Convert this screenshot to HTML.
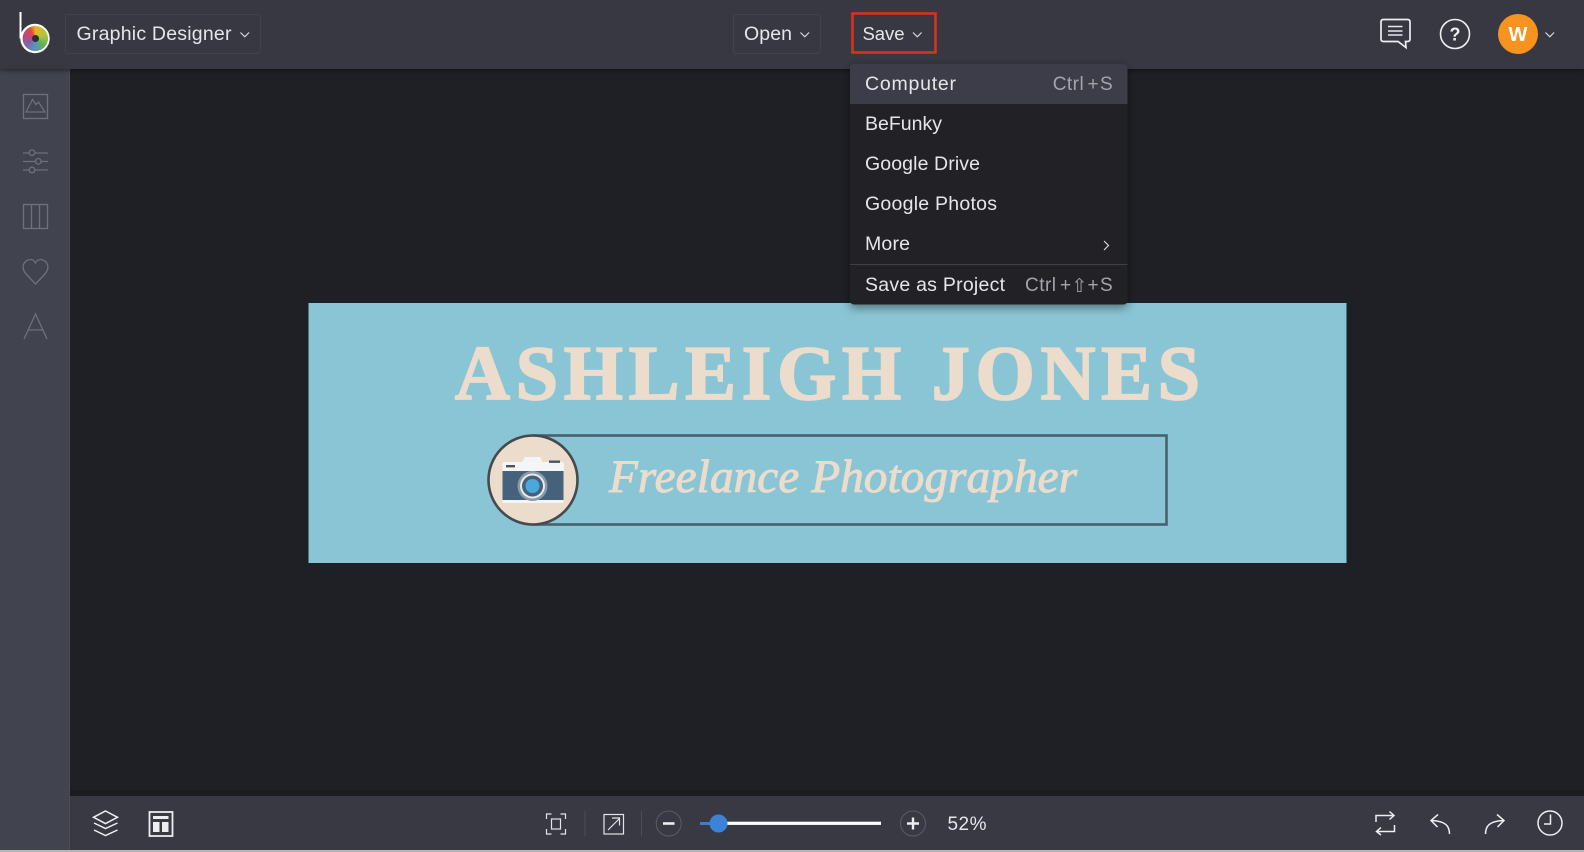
<!DOCTYPE html>
<html lang="en"><head><meta charset="utf-8"><title>Graphic Designer</title>
<style>
html,body{margin:0;padding:0;width:1584px;height:852px;overflow:hidden;background:#1f2025}
svg{display:block;position:absolute;left:0;top:0}
text{font-family:"Liberation Sans","DejaVu Sans",sans-serif}
.t{font-size:19.5px;fill:#e6e6ea}
.k{font-size:19px;fill:#a3a4ab}
.ch{fill:none;stroke:#d8d8dd;stroke-width:1.2}
.s{fill:none;stroke:#6e707b;stroke-width:1.3}
.w{fill:none;stroke:#eeeef0;stroke-width:1.5}
#wheel{position:absolute;left:22.500px;top:26px;width:25px;height:25px;border-radius:50%;background:conic-gradient(#e8b32c 0deg,#a8c83a 70deg,#62b05a 130deg,#5a8fc8 190deg,#8a5ea8 240deg,#c8447a 290deg,#de4a38 330deg,#e8b32c 360deg)}
</style></head><body>
<svg width="1584" height="852" viewBox="0 0 1584 852" xmlns="http://www.w3.org/2000/svg">
<defs>
<filter id="sh" x="-10%" y="-10%" width="120%" height="125%"><feDropShadow dx="0" dy="3" stdDeviation="5" flood-color="#000" flood-opacity=".45"/></filter>
<filter id="sb" x="-5%" y="-20%" width="110%" height="160%"><feDropShadow dx="0" dy="1" stdDeviation="3" flood-color="#000" flood-opacity=".5"/></filter>
</defs>
<rect width="1584" height="852" fill="#1f2025"/>
<!-- sidebar -->
<rect x="0" y="69" width="70" height="783" fill="#41434f"/>
<rect x="69" y="69" width="1" height="783" fill="#494b57"/>
<!-- canvas -->
<rect x="308.5" y="303" width="1038" height="260" fill="#8ac5d5"/>
<g transform="translate(455 399) scale(1 1.02)"><text x="0" y="0" textLength="745" lengthAdjust="spacing" style="font-family:'Liberation Serif',serif;font-weight:700;font-size:76px;fill:#ecdccb;stroke:#ecdccb;stroke-width:1.8">ASHLEIGH JONES</text></g>
<rect x="533" y="435.5" width="633.5" height="89" fill="none" stroke="#47626f" stroke-width="2.6"/>
<text x="609" y="492" textLength="468" lengthAdjust="spacing" style="font-family:'Liberation Serif',serif;font-style:italic;font-size:47px;fill:#ecdccb;stroke:#ecdccb;stroke-width:1">Freelance Photographer</text>
<circle cx="533" cy="480" r="44.5" fill="#ecdccb" stroke="#454a4e" stroke-width="2.6"/>
<path d="M502.5 471v-7q0-2 2-2h18l2-5h16l2 5h19q2.500 0 2.500 2v7z" fill="#f3f5f8"/>
<rect x="502.5" y="471" width="61" height="29" fill="#45627a"/>
<rect x="502.5" y="500" width="61" height="3" fill="#f3f5f8"/>
<rect x="506" y="465" width="9" height="2.400" fill="#4a5560"/><rect x="549" y="460.500" width="11" height="2.400" fill="#4a5560"/>
<circle cx="532.5" cy="486" r="15" fill="#8b9aa8"/><circle cx="532.5" cy="486" r="12.5" fill="#e6ebef"/><circle cx="532.5" cy="486" r="10.5" fill="#45627a"/><circle cx="532.5" cy="486" r="7" fill="#4aa8dc"/>
<!-- sidebar icons -->
<g class="s">
<rect x="23.5" y="94.5" width="24" height="24"/><path d="M26 112l6.500-12.500 3.500 5 2.500-2.500 6.500 10z"/>
<path d="M23 153h6M35 153h13M23 161.500h12.500M41 161.500h7M23 170h6M35 170h13"/>
<circle cx="32" cy="152.700" r="2.800"/><circle cx="38.300" cy="161.300" r="2.800"/><circle cx="32" cy="170" r="2.800"/>
<rect x="23.500" y="204.500" width="24" height="24"/><path d="M31.500 204.500v24M39.500 204.500v24"/>
<path d="M35.500 284l-9-9.500c-7-7.500-2-15 4-15 2.500 0 4 1.500 5 3.500 1-2 2.500-3.500 5-3.500 6 0 11 7.500 4 15z"/>
<path d="M24 339l11.500-25 11.500 25M28 330h15"/>
</g>
<!-- top bar -->
<rect x="0" y="0" width="1584" height="69" fill="#383943" filter="url(#sb)"/>
<path d="M20.500 12v26.500" stroke="#fff" stroke-width="2" fill="none"/>
<circle cx="35" cy="38.500" r="13.500" fill="none" stroke="#fff" stroke-width="2.400"/>
<rect x="65.500" y="14.500" width="195" height="39" rx="3" fill="none" stroke="#41424c"/>
<text class="t" x="76.500" y="40" textLength="155">Graphic Designer</text>
<path class="ch" d="M240.500 32.500l4.300 4.300 4.300-4.300"/>
<rect x="733.500" y="14.500" width="87" height="39" rx="3" fill="none" stroke="#41424c"/>
<text class="t" x="744" y="40" textLength="48">Open</text>
<path class="ch" d="M800.500 32.500l4.300 4.300 4.300-4.300"/>
<rect x="852.500" y="13.500" width="83" height="39" fill="none" stroke="#d7321c" stroke-width="2.600"/>
<text class="t" x="862.500" y="40" textLength="42" style="font-size:18.500px">Save</text>
<path class="ch" d="M913 32.500l4.300 4.300 4.300-4.300"/>
<!-- top right -->
<path d="M1381 22q0-2.500 2.500-2.500h24q2.500 0 2.500 2.500v17q0 2.500-2.500 2.500h-2l.5 6-8-6h-14.500q-2.500 0-2.500-2.500z" fill="none" stroke="#eeeef0" stroke-width="1.700"/>
<path d="M1388 26.500h14.500M1388 31h14.500M1388 35h14.500" stroke="#e6e6ea" stroke-width="1.600"/>
<circle cx="1455" cy="34" r="14.500" fill="none" stroke="#eeeef0" stroke-width="1.600"/>
<text x="1455" y="40.500" text-anchor="middle" style="font-size:18px;font-weight:700;fill:#eeeef0">?</text>
<circle cx="1518" cy="34" r="20" fill="#f7931e"/>
<text x="1518" y="41" text-anchor="middle" style="font-size:20px;font-weight:700;fill:#fff">W</text>
<path class="ch" d="M1545.500 32.500l4.300 4.300 4.300-4.300"/>
<!-- menu -->
<rect x="850" y="64" width="277.500" height="240.500" rx="4" fill="#212228" filter="url(#sh)"/>
<path d="M850 104V68q0-4 4-4h269.500q4 0 4 4v36z" fill="#3c3d48"/>
<rect x="850" y="264" width="277.500" height="1" fill="#3f4049"/>
<text class="t" x="865" y="90" textLength="91">Computer</text>
<text class="k" x="1052.700" y="90" textLength="31">Ctrl</text><text class="k" x="1087.500" y="90">+</text><text class="k" x="1100" y="90">S</text>
<text class="t" x="865" y="130" textLength="77">BeFunky</text>
<text class="t" x="865" y="170" textLength="115">Google Drive</text>
<text class="t" x="865" y="210" textLength="132">Google Photos</text>
<text class="t" x="865" y="250" textLength="45">More</text>
<path class="ch" d="M1104 241l4.500 4.500-4.500 4.500"/>
<text class="t" x="865" y="291" textLength="140">Save as Project</text>
<text class="k" x="1025" y="291" textLength="31">Ctrl</text><text class="k" x="1060" y="291">+</text><text class="k" x="1071.500" y="292" style="font-size:19px">⇧</text><text class="k" x="1087.500" y="291">+</text><text class="k" x="1100" y="291">S</text>
<!-- bottom bar -->
<rect x="70" y="796" width="1514" height="54" fill="#383943"/>
<rect x="0" y="850" width="1584" height="2" fill="#b5b5b8"/>
<rect x="70" y="790" width="1514" height="6" fill="#17181c" opacity=".5"/>
<!-- layers -->
<g class="w">
<path d="M105.500 811l12 6.300-12 6.300-12-6.300z"/><path d="M94 823l11.500 5.500 12-5.500M94 830l11.500 5.500 12-5.500"/>
<rect x="149.500" y="812" width="23" height="24" stroke-width="1.800"/>
</g>
<path d="M153 816h15.500v3H153zM153 822h6.500v10H153zM162 822h6.500v10H162z" fill="#eeeef0"/>
<g fill="none" stroke="#e4e4e8" stroke-width="1.200">
<path d="M546.500 819v-5h5M560.500 814h5v5M565.500 829v5h-5M551.500 834h-5v-5"/>
<rect x="551.500" y="819" width="9" height="10"/>
<rect x="604" y="814.500" width="19.500" height="19.500"/><path d="M608 830l11.500-11.500M612 818h7.500v7.500"/>
</g>
<path d="M585 811v25M641.500 811v25" stroke="#4c4d58"/>
<circle cx="668.700" cy="823.500" r="12.500" fill="none" stroke="#5a5b66"/>
<path d="M663 823.500h11.500" stroke="#eeeef0" stroke-width="2.600"/>
<rect x="700" y="822" width="20" height="3" fill="#3b7ed2"/>
<rect x="718" y="821.700" width="163" height="3.200" fill="#fff"/>
<circle cx="718.500" cy="823.500" r="9" fill="#3b82d8"/>
<circle cx="913" cy="823.500" r="12.500" fill="none" stroke="#5a5b66"/>
<path d="M907 823.500h12M913 817.500v12" stroke="#eeeef0" stroke-width="2.400"/>
<text x="947.500" y="830" textLength="39" style="font-size:19px;fill:#e6e6ea">52%</text>
<g class="w">
<path d="M1376 822v-6.500h18M1389.500 811.500l4.500 4-4.500 4"/><path d="M1394.500 825v6.500h-18M1381 835l-4.500-3.500 4.500-4"/>
<path d="M1449.500 834c0-8-4-13-18-13.500M1438 814.500l-7 6 6.500 6.500"/>
<path d="M1485.500 834c0-8 4-13 18-13.500M1497 814.500l7 6-6.500 6.500"/>
<circle cx="1550" cy="823" r="12"/><path d="M1550.500 814.500v9.500h-6.500"/>
</g>
</svg>
<div id="wheel"><div style="position:absolute;left:9px;top:9px;width:7px;height:7px;border-radius:50%;background:#2e2e34"></div></div>
</body></html>
